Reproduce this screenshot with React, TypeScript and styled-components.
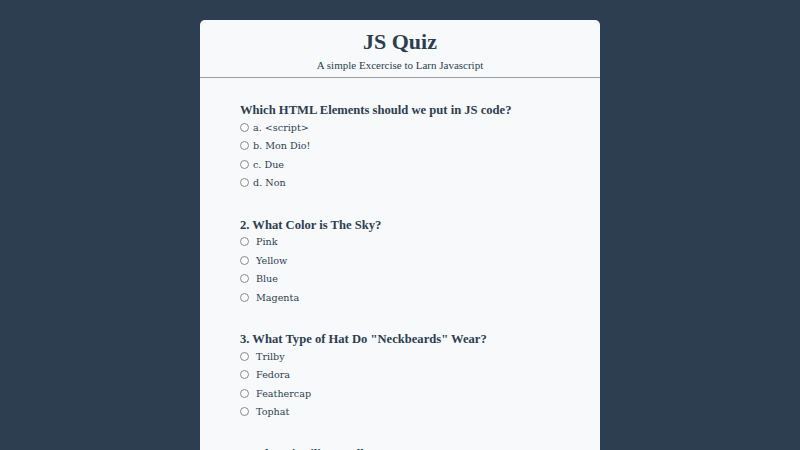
import React from "react";
import styled, { createGlobalStyle } from "styled-components";

const Global = createGlobalStyle`
  html, body { margin: 0; padding: 0; background: #2c3e50; height: 100%; overflow: hidden; }
  body { font-family: "DejaVu Serif", "Liberation Serif", serif; color: #2c3e50; }
`;

const Card = styled.div`
  width: 400px;
  margin: 20px auto 0;
  background: #f8f9fa;
  border-radius: 5px;
  min-height: 500px;
`;

const Header = styled.header`
  padding: 9px 0 5px;
  text-align: center;
  border-bottom: 1px solid #9a9fa4;
`;

const Title = styled.h1`
  margin: 0;
  font-family: "Liberation Serif", serif;
  font-size: 22px;
  line-height: 26px;
  font-weight: 700;
`;

const Subtitle = styled.p`
  margin: 3px 0 0;
  font-family: "Liberation Serif", serif;
  font-size: 11px;
  line-height: 14px;
`;

const Body = styled.div`
  padding: 24px 40px 0;
`;

const Question = styled.div`
  margin-bottom: 24.5px;
`;

const QTitle = styled.h2`
  margin: 0;
  font-family: "Liberation Serif", serif;
  font-size: 12.6px;
  line-height: 16px;
  font-weight: 700;
`;

const Option = styled.label<{ $indent: number }>`
  display: flex;
  align-items: center;
  height: 18.5px;
  font-size: 9.6px;
  cursor: pointer;
  span { margin-left: ${(p) => p.$indent}px; }
`;

const Radio = styled.input`
  appearance: none;
  width: 9px;
  height: 9px;
  margin: 0;
  border: 1px solid #8a8a8a;
  border-radius: 50%;
  background: #fff;
  box-sizing: border-box;
  flex-shrink: 0;
`;

const questions = [
  { q: "Which HTML Elements should we put in JS code?", opts: ["a. <script>", "b. Mon Dio!", "c. Due", "d. Non"], indent: 4 },
  { q: "2. What Color is The Sky?", opts: ["Pink", "Yellow", "Blue", "Magenta"], indent: 7 },
  { q: '3. What Type of Hat Do "Neckbeards" Wear?', opts: ["Trilby", "Fedora", "Feathercap", "Tophat"], indent: 7 },
  { q: "4. Where is Silicon Valley?", opts: ["California", "Texas", "Oregon", "Nevada"], indent: 7 },
];

export default function App() {
  return (
    <>
      <Global />
      <Card>
        <Header>
          <Title>JS Quiz</Title>
          <Subtitle>A simple Excercise to Larn Javascript</Subtitle>
        </Header>
        <Body>
          {questions.map((item, i) => (
            <Question key={i}>
              <QTitle>{item.q}</QTitle>
              {item.opts.map((o, j) => (
                <Option key={j} $indent={item.indent}>
                  <Radio type="radio" name={`q${i}`} />
                  <span>{o}</span>
                </Option>
              ))}
            </Question>
          ))}
        </Body>
      </Card>
    </>
  );
}
